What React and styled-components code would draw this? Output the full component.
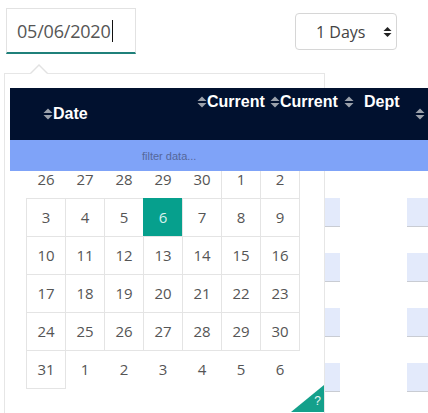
import styled, { createGlobalStyle } from 'styled-components'

const GlobalStyle = createGlobalStyle`
  html, body {
    margin: 0;
    padding: 0;
    overflow: hidden;
    background: #fff;
  }
  body {
    font-family: "Open Sans", "Liberation Sans", sans-serif;
  }
`

const weeks = [
  [[26, false], [27, false], [28, false], [29, false], [30, false], [1, true], [2, true]],
  [[3, true], [4, true], [5, true], [6, true], [7, true], [8, true], [9, true]],
  [[10, true], [11, true], [12, true], [13, true], [14, true], [15, true], [16, true]],
  [[17, true], [18, true], [19, true], [20, true], [21, true], [22, true], [23, true]],
  [[24, true], [25, true], [26, true], [27, true], [28, true], [29, true], [30, true]],
  [[31, true], [1, false], [2, false], [3, false], [4, false], [5, false], [6, false]],
]

const SortIcon = () => (
  <svg width="10" height="12" viewBox="0 0 10 12">
    <path d="M5 0.5 L9.5 5 L0.5 5 Z" fill="#9ba1ab" />
    <path d="M5 11.5 L9.5 7 L0.5 7 Z" fill="#9ba1ab" />
  </svg>
)

const SelectArrow = () => (
  <svg width="9" height="12" viewBox="0 0 9 12">
    <path d="M4.5 1 L8.5 5 L0.5 5 Z" fill="#222" />
    <path d="M4.5 11 L8.5 7 L0.5 7 Z" fill="#222" />
  </svg>
)

const App = () => {
  const rows = [0, 1, 2, 3]
  return (
    <>
      <GlobalStyle />
      <Page>
        <Toolbar>
          <DateInput>
            05/06/2020<Caret />
          </DateInput>
          <Select>
            1 Days
            <SelectArrow />
          </Select>
        </Toolbar>

        <Popup>
          <Grid>
            {weeks.map((week, wi) =>
              week.map(([day, inMonth], di) => (
                <Day
                  key={`${wi}-${di}`}
                  $inMonth={inMonth}
                  $selected={inMonth && day === 6}
                >
                  {day}
                </Day>
              ))
            )}
          </Grid>
          <HelpCorner>
            <HelpMark>?</HelpMark>
          </HelpCorner>
        </Popup>

        <Table>
          <HeaderRow>
            <HeadCell $width={187} $align="center" $pad={33}>
              <SortIcon />Date
            </HeadCell>
            <HeadCell $width={73} $align="flex-start">
              <SortIcon />Current
            </HeadCell>
            <HeadCell $width={94} $align="flex-start">
              <SortIcon />Current<Gap />
              <SortIcon />
            </HeadCell>
            <HeadCell $width={51} $align="flex-start">
              Dept
            </HeadCell>
            <HeadCell $width={20} $align="center">
              <SortIcon />
            </HeadCell>
          </HeaderRow>
          <FilterBar>
            <FilterText>filter data...</FilterText>
          </FilterBar>
          <Body>
            {rows.map(r => (
              <Row key={r}>
                <InputBlock $left={250} $width={80} />
                <InputBlock $left={67} $width={100} />
              </Row>
            ))}
          </Body>
        </Table>
      </Page>
    </>
  )
}

const Page = styled.div`
  position: relative;
  width: 428px;
  height: 413px;
  overflow: hidden;
  padding-top: 8px;
  box-sizing: border-box;
`

const Toolbar = styled.div`
  display: flex;
  align-items: flex-start;
  height: 80px;
  padding-left: 6px;
`

const DateInput = styled.div`
  box-sizing: border-box;
  width: 130px;
  height: 46px;
  border: 1px solid #e2e2e2;
  border-bottom: 2px solid #1f807a;
  padding-left: 10px;
  display: flex;
  align-items: center;
  font-size: 18px;
  color: #555;
  letter-spacing: -0.2px;
`

const Caret = styled.span`
  display: inline-block;
  width: 1px;
  height: 22px;
  background: #111;
  margin-left: 1px;
`

const Select = styled.div`
  box-sizing: border-box;
  margin-left: auto;
  margin-right: 31px;
  margin-top: 5px;
  width: 102px;
  height: 37px;
  border: 1px solid #d6d6d6;
  border-radius: 4px;
  display: flex;
  align-items: center;
  gap: 18px;
  padding-left: 20px;
  font-size: 16px;
  color: #444;
`

const Popup = styled.div`
  position: absolute;
  left: 4px;
  top: 73px;
  width: 321px;
  height: 345px;
  box-sizing: border-box;
  background: #fff;
  border: 1px solid #e6e6e6;
  padding: 86px 0 0 21px;
  z-index: 2;

  &::before,
  &::after {
    content: '';
    position: absolute;
    width: 0;
    height: 0;
    border-style: solid;
  }
  &::before {
    left: 25px;
    top: -10px;
    border-width: 0 9px 9px 9px;
    border-color: transparent transparent #e2e2e2 transparent;
  }
  &::after {
    left: 26px;
    top: -8px;
    border-width: 0 8px 8px 8px;
    border-color: transparent transparent #fff transparent;
  }
`

const Grid = styled.div`
  display: grid;
  grid-template-columns: repeat(7, 39px);
  grid-auto-rows: 38px;
`

const Day = styled.div`
  box-sizing: border-box;
  width: 40px;
  height: 39px;
  display: flex;
  align-items: center;
  justify-content: center;
  font-size: 15px;
  color: ${p => (p.$selected ? '#d9f2ee' : '#555')};
  background: ${p => (p.$selected ? '#06a08d' : 'transparent')};
  border: 1px solid ${p => (p.$inMonth ? (p.$selected ? '#06a08d' : '#e4e4e4') : 'transparent')};
  padding-bottom: 1px;
`

const HelpCorner = styled.div`
  position: absolute;
  right: 0;
  bottom: 5px;
  width: 0;
  height: 0;
  border-style: solid;
  border-width: 0 0 27px 33px;
  border-color: transparent transparent #14a08b transparent;
`

const HelpMark = styled.span`
  position: absolute;
  right: 3px;
  top: 9px;
  font-size: 12px;
  color: #e9f7f4;
  font-family: "Liberation Sans", sans-serif;
`

const Table = styled.div`
  margin-left: 10px;
  width: 520px;
`

const HeaderRow = styled.div`
  position: relative;
  z-index: 3;
  display: flex;
  height: 52px;
  background: #01112f;
  font-family: "Liberation Sans", Arial, sans-serif;
  font-weight: bold;
  font-size: 16px;
  color: #fff;
`

const HeadCell = styled.div`
  box-sizing: border-box;
  width: ${p => p.$width}px;
  flex: none;
  display: flex;
  align-items: ${p => p.$align};
  padding-left: ${p => p.$pad || 0}px;
  padding-top: ${p => (p.$align === 'flex-start' ? 5 : 0)}px;
  line-height: 18px;
  white-space: nowrap;

  svg {
    flex: none;
    margin-top: ${p => (p.$align === 'flex-start' ? 3 : 0)}px;
  }
`

const Gap = styled.span`
  display: inline-block;
  width: 6px;
`

const FilterBar = styled.div`
  position: relative;
  z-index: 3;
  height: 31px;
  background: #7fa3f8;
  display: flex;
  align-items: center;
  padding-left: 132px;
`

const FilterText = styled.span`
  font-family: "Liberation Sans", Arial, sans-serif;
  font-size: 11px;
  color: #55679a;
`

const Body = styled.div`
  padding-top: 27px;
`

const Row = styled.div`
  display: flex;
  height: 29px;
  margin-bottom: 26px;
`

const InputBlock = styled.div`
  box-sizing: border-box;
  margin-left: ${p => p.$left}px;
  width: ${p => p.$width}px;
  flex: none;
  height: 29px;
  background: #e3eafb;
  border-bottom: 1px solid #c9ccd3;
`

export default App
